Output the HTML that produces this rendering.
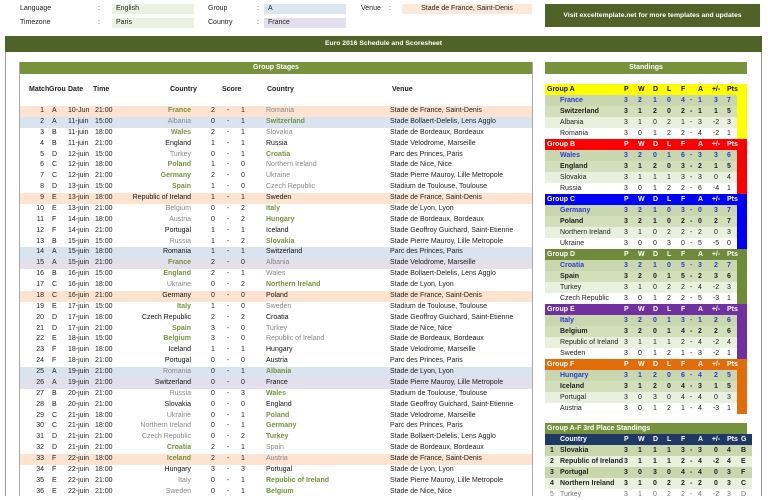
<!DOCTYPE html>
<html><head><meta charset="utf-8"><style>
*{margin:0;padding:0;box-sizing:border-box}
body{width:768px;height:496px;overflow:hidden;background:#fff;font-family:"Liberation Sans",sans-serif;font-size:7px;color:#222;position:relative}
.a{position:absolute;white-space:nowrap}
.lbl{position:absolute;font-size:7px}
.inp{position:absolute;height:10px;font-size:7px;padding-left:4px;line-height:10px}
#sched{position:absolute;left:20px;top:106px;width:512px}
.r{position:relative;height:10.88px;line-height:10.88px}
.r span{position:absolute;top:0}
.n{left:0;width:24px;text-align:right}.g{left:32px}.d{left:48px}.t{left:75px}
.c1{left:90px;width:81px;text-align:right}.s1{left:191px}.dh{left:207px}.s2{left:221px}
.c2{left:246px}.v{left:370px}
.W{color:#76923c;font-weight:bold}.L{color:#888}.D{color:#111}
.pe{background:#fde3d0}.bl{background:#dae4f0}.la{background:#e3dfeb}
.grp{position:absolute;left:545px;width:202px;height:55px}
.gh{height:11px;line-height:11px;color:#fff;font-weight:bold;position:relative}
.sr{height:11px;line-height:11px;position:relative;width:192px}
.sr span,.gh span{position:absolute;top:0}
.nm{left:15px}.p{left:79px}.w{left:93px}.dd{left:108px}.l{left:122px}.f{left:136px}.m{left:145px}.aa{left:153px}.pm{left:166px;width:10px;text-align:center}.pt{left:182px}.gg{left:196px}
.s1c{background:#c9d7ae}.s2c{background:#d2dfba}.s3c{background:#e9f0dd}.s4c{background:#fff}
.bb{font-weight:bold}.blue{color:#2d3bd6;font-weight:bold}
</style></head><body>
<div class="lbl" style="left:20px;top:5px">Language</div><div class="lbl" style="left:98px;top:5px">:</div>
<div class="inp" style="left:112px;top:4px;width:82px;background:#ebf1de">English</div>
<div class="lbl" style="left:208px;top:5px">Group</div><div class="lbl" style="left:257px;top:5px">:</div>
<div class="inp" style="left:264px;top:4px;width:82px;background:#dce6f1">A</div>
<div class="lbl" style="left:361px;top:5px">Venue</div><div class="lbl" style="left:389px;top:5px">:</div>
<div class="inp" style="left:402px;top:4px;width:130px;background:#fde9d9;text-align:center;padding:0">Stade de France, Saint-Denis</div>
<div class="lbl" style="left:20px;top:19px">Timezone</div><div class="lbl" style="left:98px;top:19px">:</div>
<div class="inp" style="left:112px;top:18px;width:82px;background:#ebf1de">Paris</div>
<div class="lbl" style="left:208px;top:19px">Country</div><div class="lbl" style="left:257px;top:19px">:</div>
<div class="inp" style="left:264px;top:18px;width:82px;background:#e4dfec">France</div>
<div class="a" style="left:545px;top:4px;width:215px;height:23px;background:#4f6228;color:#fff;font-weight:bold;font-size:6.8px;text-align:center;line-height:23px">Visit exceltemplate.net for more templates and updates</div>
<div class="a" style="left:5px;top:36px;width:757px;height:16px;background:#4f6228;color:#fff;font-weight:bold;text-align:center;line-height:16px;font-size:6.8px">Euro 2016 Schedule and Scoresheet</div>
<div class="a" style="left:5px;top:52px;width:1px;height:444px;background:#999"></div>
<div class="a" style="left:761px;top:52px;width:1px;height:444px;background:#999"></div>
<div class="a" style="left:19px;top:62px;width:1px;height:434px;background:#aaa"></div>
<div class="a" style="left:532px;top:62px;width:1px;height:434px;background:#aaa"></div>
<div class="a" style="left:20px;top:62px;width:512px;height:12px;background:#76923c;color:#fff;font-weight:bold;text-align:center;line-height:12px">Group Stages</div>
<div class="a" style="left:545px;top:62px;width:202px;height:12px;background:#76923c;color:#fff;font-weight:bold;text-align:center;line-height:12px">Standings</div>
<div class="a bb" style="left:29px;top:86px">Match</div><div class="a bb" style="left:49px;top:86px">Grou</div><div class="a bb" style="left:68px;top:86px">Date</div><div class="a bb" style="left:93px;top:86px">Time</div>
<div class="a bb" style="left:170px;top:86px">Country</div><div class="a bb" style="left:222px;top:86px">Score</div><div class="a bb" style="left:267px;top:86px">Country</div><div class="a bb" style="left:392px;top:86px">Venue</div>
<div id="sched">
<div class="r pe"><span class="n">1</span><span class="g">A</span><span class="d">10-Jun</span><span class="t">21:00</span><span class="c1 W">France</span><span class="s1">2</span><span class="dh">-</span><span class="s2">1</span><span class="c2 L">Romania</span><span class="v">Stade de France, Saint-Denis</span></div>
<div class="r bl"><span class="n">2</span><span class="g">A</span><span class="d">11-juin</span><span class="t">15:00</span><span class="c1 L">Albania</span><span class="s1">0</span><span class="dh">-</span><span class="s2">1</span><span class="c2 W">Switzerland</span><span class="v">Stade Bollaert-Delelis, Lens Agglo</span></div>
<div class="r"><span class="n">3</span><span class="g">B</span><span class="d">11-juin</span><span class="t">18:00</span><span class="c1 W">Wales</span><span class="s1">2</span><span class="dh">-</span><span class="s2">1</span><span class="c2 L">Slovakia</span><span class="v">Stade de Bordeaux, Bordeaux</span></div>
<div class="r"><span class="n">4</span><span class="g">B</span><span class="d">11-juin</span><span class="t">21:00</span><span class="c1 D">England</span><span class="s1">1</span><span class="dh">-</span><span class="s2">1</span><span class="c2 D">Russia</span><span class="v">Stade Velodrome, Marseille</span></div>
<div class="r"><span class="n">5</span><span class="g">D</span><span class="d">12-juin</span><span class="t">15:00</span><span class="c1 L">Turkey</span><span class="s1">0</span><span class="dh">-</span><span class="s2">1</span><span class="c2 W">Croatia</span><span class="v">Parc des Princes, Paris</span></div>
<div class="r"><span class="n">6</span><span class="g">C</span><span class="d">12-juin</span><span class="t">18:00</span><span class="c1 W">Poland</span><span class="s1">1</span><span class="dh">-</span><span class="s2">0</span><span class="c2 L">Northern Ireland</span><span class="v">Stade de Nice, Nice</span></div>
<div class="r"><span class="n">7</span><span class="g">C</span><span class="d">12-juin</span><span class="t">21:00</span><span class="c1 W">Germany</span><span class="s1">2</span><span class="dh">-</span><span class="s2">0</span><span class="c2 L">Ukraine</span><span class="v">Stade Pierre Mauroy, Lille Metropole</span></div>
<div class="r"><span class="n">8</span><span class="g">D</span><span class="d">13-juin</span><span class="t">15:00</span><span class="c1 W">Spain</span><span class="s1">1</span><span class="dh">-</span><span class="s2">0</span><span class="c2 L">Czech Republic</span><span class="v">Stadium de Toulouse, Toulouse</span></div>
<div class="r pe"><span class="n">9</span><span class="g">E</span><span class="d">13-juin</span><span class="t">18:00</span><span class="c1 D">Republic of Ireland</span><span class="s1">1</span><span class="dh">-</span><span class="s2">1</span><span class="c2 D">Sweden</span><span class="v">Stade de France, Saint-Denis</span></div>
<div class="r"><span class="n">10</span><span class="g">E</span><span class="d">13-juin</span><span class="t">21:00</span><span class="c1 L">Belgium</span><span class="s1">0</span><span class="dh">-</span><span class="s2">2</span><span class="c2 W">Italy</span><span class="v">Stade de Lyon, Lyon</span></div>
<div class="r"><span class="n">11</span><span class="g">F</span><span class="d">14-juin</span><span class="t">18:00</span><span class="c1 L">Austria</span><span class="s1">0</span><span class="dh">-</span><span class="s2">2</span><span class="c2 W">Hungary</span><span class="v">Stade de Bordeaux, Bordeaux</span></div>
<div class="r"><span class="n">12</span><span class="g">F</span><span class="d">14-juin</span><span class="t">21:00</span><span class="c1 D">Portugal</span><span class="s1">1</span><span class="dh">-</span><span class="s2">1</span><span class="c2 D">Iceland</span><span class="v">Stade Geoffroy Guichard, Saint-Etienne</span></div>
<div class="r"><span class="n">13</span><span class="g">B</span><span class="d">15-juin</span><span class="t">15:00</span><span class="c1 L">Russia</span><span class="s1">1</span><span class="dh">-</span><span class="s2">2</span><span class="c2 W">Slovakia</span><span class="v">Stade Pierre Mauroy, Lille Metropole</span></div>
<div class="r bl"><span class="n">14</span><span class="g">A</span><span class="d">15-juin</span><span class="t">18:00</span><span class="c1 D">Romania</span><span class="s1">1</span><span class="dh">-</span><span class="s2">1</span><span class="c2 D">Switzerland</span><span class="v">Parc des Princes, Paris</span></div>
<div class="r la"><span class="n">15</span><span class="g">A</span><span class="d">15-juin</span><span class="t">21:00</span><span class="c1 W">France</span><span class="s1">2</span><span class="dh">-</span><span class="s2">0</span><span class="c2 L">Albania</span><span class="v">Stade Velodrome, Marseille</span></div>
<div class="r"><span class="n">16</span><span class="g">B</span><span class="d">16-juin</span><span class="t">15:00</span><span class="c1 W">England</span><span class="s1">2</span><span class="dh">-</span><span class="s2">1</span><span class="c2 L">Wales</span><span class="v">Stade Bollaert-Delelis, Lens Agglo</span></div>
<div class="r"><span class="n">17</span><span class="g">C</span><span class="d">16-juin</span><span class="t">18:00</span><span class="c1 L">Ukraine</span><span class="s1">0</span><span class="dh">-</span><span class="s2">2</span><span class="c2 W">Northern Ireland</span><span class="v">Stade de Lyon, Lyon</span></div>
<div class="r pe"><span class="n">18</span><span class="g">C</span><span class="d">16-juin</span><span class="t">21:00</span><span class="c1 D">Germany</span><span class="s1">0</span><span class="dh">-</span><span class="s2">0</span><span class="c2 D">Poland</span><span class="v">Stade de France, Saint-Denis</span></div>
<div class="r"><span class="n">19</span><span class="g">E</span><span class="d">17-juin</span><span class="t">15:00</span><span class="c1 W">Italy</span><span class="s1">1</span><span class="dh">-</span><span class="s2">0</span><span class="c2 L">Sweden</span><span class="v">Stadium de Toulouse, Toulouse</span></div>
<div class="r"><span class="n">20</span><span class="g">D</span><span class="d">17-juin</span><span class="t">18:00</span><span class="c1 D">Czech Republic</span><span class="s1">2</span><span class="dh">-</span><span class="s2">2</span><span class="c2 D">Croatia</span><span class="v">Stade Geoffroy Guichard, Saint-Etienne</span></div>
<div class="r"><span class="n">21</span><span class="g">D</span><span class="d">17-juin</span><span class="t">21:00</span><span class="c1 W">Spain</span><span class="s1">3</span><span class="dh">-</span><span class="s2">0</span><span class="c2 L">Turkey</span><span class="v">Stade de Nice, Nice</span></div>
<div class="r"><span class="n">22</span><span class="g">E</span><span class="d">18-juin</span><span class="t">15:00</span><span class="c1 W">Belgium</span><span class="s1">3</span><span class="dh">-</span><span class="s2">0</span><span class="c2 L">Republic of Ireland</span><span class="v">Stade de Bordeaux, Bordeaux</span></div>
<div class="r"><span class="n">23</span><span class="g">F</span><span class="d">18-juin</span><span class="t">18:00</span><span class="c1 D">Iceland</span><span class="s1">1</span><span class="dh">-</span><span class="s2">1</span><span class="c2 D">Hungary</span><span class="v">Stade Velodrome, Marseille</span></div>
<div class="r"><span class="n">24</span><span class="g">F</span><span class="d">18-juin</span><span class="t">21:00</span><span class="c1 D">Portugal</span><span class="s1">0</span><span class="dh">-</span><span class="s2">0</span><span class="c2 D">Austria</span><span class="v">Parc des Princes, Paris</span></div>
<div class="r bl"><span class="n">25</span><span class="g">A</span><span class="d">19-juin</span><span class="t">21:00</span><span class="c1 L">Romania</span><span class="s1">0</span><span class="dh">-</span><span class="s2">1</span><span class="c2 W">Albania</span><span class="v">Stade de Lyon, Lyon</span></div>
<div class="r la"><span class="n">26</span><span class="g">A</span><span class="d">19-juin</span><span class="t">21:00</span><span class="c1 D">Switzerland</span><span class="s1">0</span><span class="dh">-</span><span class="s2">0</span><span class="c2 D">France</span><span class="v">Stade Pierre Mauroy, Lille Metropole</span></div>
<div class="r"><span class="n">27</span><span class="g">B</span><span class="d">20-juin</span><span class="t">21:00</span><span class="c1 L">Russia</span><span class="s1">0</span><span class="dh">-</span><span class="s2">3</span><span class="c2 W">Wales</span><span class="v">Stadium de Toulouse, Toulouse</span></div>
<div class="r"><span class="n">28</span><span class="g">B</span><span class="d">20-juin</span><span class="t">21:00</span><span class="c1 D">Slovakia</span><span class="s1">0</span><span class="dh">-</span><span class="s2">0</span><span class="c2 D">England</span><span class="v">Stade Geoffroy Guichard, Saint-Etienne</span></div>
<div class="r"><span class="n">29</span><span class="g">C</span><span class="d">21-juin</span><span class="t">18:00</span><span class="c1 L">Ukraine</span><span class="s1">0</span><span class="dh">-</span><span class="s2">1</span><span class="c2 W">Poland</span><span class="v">Stade Velodrome, Marseille</span></div>
<div class="r"><span class="n">30</span><span class="g">C</span><span class="d">21-juin</span><span class="t">18:00</span><span class="c1 L">Northern Ireland</span><span class="s1">0</span><span class="dh">-</span><span class="s2">1</span><span class="c2 W">Germany</span><span class="v">Parc des Princes, Paris</span></div>
<div class="r"><span class="n">31</span><span class="g">D</span><span class="d">21-juin</span><span class="t">21:00</span><span class="c1 L">Czech Republic</span><span class="s1">0</span><span class="dh">-</span><span class="s2">2</span><span class="c2 W">Turkey</span><span class="v">Stade Bollaert-Delelis, Lens Agglo</span></div>
<div class="r"><span class="n">32</span><span class="g">D</span><span class="d">21-juin</span><span class="t">21:00</span><span class="c1 W">Croatia</span><span class="s1">2</span><span class="dh">-</span><span class="s2">1</span><span class="c2 L">Spain</span><span class="v">Stade de Bordeaux, Bordeaux</span></div>
<div class="r pe"><span class="n">33</span><span class="g">F</span><span class="d">22-juin</span><span class="t">18:00</span><span class="c1 W">Iceland</span><span class="s1">2</span><span class="dh">-</span><span class="s2">1</span><span class="c2 L">Austria</span><span class="v">Stade de France, Saint-Denis</span></div>
<div class="r"><span class="n">34</span><span class="g">F</span><span class="d">22-juin</span><span class="t">18:00</span><span class="c1 D">Hungary</span><span class="s1">3</span><span class="dh">-</span><span class="s2">3</span><span class="c2 D">Portugal</span><span class="v">Stade de Lyon, Lyon</span></div>
<div class="r"><span class="n">35</span><span class="g">E</span><span class="d">22-juin</span><span class="t">21:00</span><span class="c1 L">Italy</span><span class="s1">0</span><span class="dh">-</span><span class="s2">1</span><span class="c2 W">Republic of Ireland</span><span class="v">Stade Pierre Mauroy, Lille Metropole</span></div>
<div class="r"><span class="n">36</span><span class="g">E</span><span class="d">22-juin</span><span class="t">21:00</span><span class="c1 L">Sweden</span><span class="s1">0</span><span class="dh">-</span><span class="s2">1</span><span class="c2 W">Belgium</span><span class="v">Stade de Nice, Nice</span></div>
</div>

<div class="grp" style="top:84px;background:#ffff00">
<div class="gh" style="color:#111"><span style="left:2px">Group A</span><span class="p">P</span><span class="w">W</span><span class="dd">D</span><span class="l">L</span><span class="f">F</span><span class="aa">A</span><span class="pm">+/-</span><span class="pt">Pts</span></div>
<div class="sr s1c"><span class="nm blue">France</span><span class="p blue">3</span><span class="w blue">2</span><span class="dd blue">1</span><span class="l blue">0</span><span class="f blue">4</span><span class="m">-</span><span class="aa blue">1</span><span class="pm blue">3</span><span class="pt blue">7</span></div>
<div class="sr s2c bb"><span class="nm">Switzerland</span><span class="p">3</span><span class="w">1</span><span class="dd">2</span><span class="l">0</span><span class="f">2</span><span class="m">-</span><span class="aa">1</span><span class="pm">1</span><span class="pt">5</span></div>
<div class="sr s3c"><span class="nm">Albania</span><span class="p">3</span><span class="w">1</span><span class="dd">0</span><span class="l">2</span><span class="f">1</span><span class="m">-</span><span class="aa">3</span><span class="pm">-2</span><span class="pt">3</span></div>
<div class="sr s4c"><span class="nm">Romania</span><span class="p">3</span><span class="w">0</span><span class="dd">1</span><span class="l">2</span><span class="f">2</span><span class="m">-</span><span class="aa">4</span><span class="pm">-2</span><span class="pt">1</span></div>
</div>
<div class="grp" style="top:139px;background:#ff0000">
<div class="gh"><span style="left:2px">Group B</span><span class="p">P</span><span class="w">W</span><span class="dd">D</span><span class="l">L</span><span class="f">F</span><span class="aa">A</span><span class="pm">+/-</span><span class="pt">Pts</span></div>
<div class="sr s1c"><span class="nm blue">Wales</span><span class="p blue">3</span><span class="w blue">2</span><span class="dd blue">0</span><span class="l blue">1</span><span class="f blue">6</span><span class="m">-</span><span class="aa blue">3</span><span class="pm blue">3</span><span class="pt blue">6</span></div>
<div class="sr s2c bb"><span class="nm">England</span><span class="p">3</span><span class="w">1</span><span class="dd">2</span><span class="l">0</span><span class="f">3</span><span class="m">-</span><span class="aa">2</span><span class="pm">1</span><span class="pt">5</span></div>
<div class="sr s3c"><span class="nm">Slovakia</span><span class="p">3</span><span class="w">1</span><span class="dd">1</span><span class="l">1</span><span class="f">3</span><span class="m">-</span><span class="aa">3</span><span class="pm">0</span><span class="pt">4</span></div>
<div class="sr s4c"><span class="nm">Russia</span><span class="p">3</span><span class="w">0</span><span class="dd">1</span><span class="l">2</span><span class="f">2</span><span class="m">-</span><span class="aa">6</span><span class="pm">-4</span><span class="pt">1</span></div>
</div>
<div class="grp" style="top:194px;background:#0000ff">
<div class="gh"><span style="left:2px">Group C</span><span class="p">P</span><span class="w">W</span><span class="dd">D</span><span class="l">L</span><span class="f">F</span><span class="aa">A</span><span class="pm">+/-</span><span class="pt">Pts</span></div>
<div class="sr s1c"><span class="nm blue">Germany</span><span class="p blue">3</span><span class="w blue">2</span><span class="dd blue">1</span><span class="l blue">0</span><span class="f blue">3</span><span class="m">-</span><span class="aa blue">0</span><span class="pm blue">3</span><span class="pt blue">7</span></div>
<div class="sr s2c bb"><span class="nm">Poland</span><span class="p">3</span><span class="w">2</span><span class="dd">1</span><span class="l">0</span><span class="f">2</span><span class="m">-</span><span class="aa">0</span><span class="pm">2</span><span class="pt">7</span></div>
<div class="sr s3c"><span class="nm">Northern Ireland</span><span class="p">3</span><span class="w">1</span><span class="dd">0</span><span class="l">2</span><span class="f">2</span><span class="m">-</span><span class="aa">2</span><span class="pm">0</span><span class="pt">3</span></div>
<div class="sr s4c"><span class="nm">Ukraine</span><span class="p">3</span><span class="w">0</span><span class="dd">0</span><span class="l">3</span><span class="f">0</span><span class="m">-</span><span class="aa">5</span><span class="pm">-5</span><span class="pt">0</span></div>
</div>
<div class="grp" style="top:249px;background:#6f8a3a">
<div class="gh"><span style="left:2px">Group D</span><span class="p">P</span><span class="w">W</span><span class="dd">D</span><span class="l">L</span><span class="f">F</span><span class="aa">A</span><span class="pm">+/-</span><span class="pt">Pts</span></div>
<div class="sr s1c"><span class="nm blue">Croatia</span><span class="p blue">3</span><span class="w blue">2</span><span class="dd blue">1</span><span class="l blue">0</span><span class="f blue">5</span><span class="m">-</span><span class="aa blue">3</span><span class="pm blue">2</span><span class="pt blue">7</span></div>
<div class="sr s2c bb"><span class="nm">Spain</span><span class="p">3</span><span class="w">2</span><span class="dd">0</span><span class="l">1</span><span class="f">5</span><span class="m">-</span><span class="aa">2</span><span class="pm">3</span><span class="pt">6</span></div>
<div class="sr s3c"><span class="nm">Turkey</span><span class="p">3</span><span class="w">1</span><span class="dd">0</span><span class="l">2</span><span class="f">2</span><span class="m">-</span><span class="aa">4</span><span class="pm">-2</span><span class="pt">3</span></div>
<div class="sr s4c"><span class="nm">Czech Republic</span><span class="p">3</span><span class="w">0</span><span class="dd">1</span><span class="l">2</span><span class="f">2</span><span class="m">-</span><span class="aa">5</span><span class="pm">-3</span><span class="pt">1</span></div>
</div>
<div class="grp" style="top:304px;background:#7030a0">
<div class="gh"><span style="left:2px">Group E</span><span class="p">P</span><span class="w">W</span><span class="dd">D</span><span class="l">L</span><span class="f">F</span><span class="aa">A</span><span class="pm">+/-</span><span class="pt">Pts</span></div>
<div class="sr s1c"><span class="nm blue">Italy</span><span class="p blue">3</span><span class="w blue">2</span><span class="dd blue">0</span><span class="l blue">1</span><span class="f blue">3</span><span class="m">-</span><span class="aa blue">1</span><span class="pm blue">2</span><span class="pt blue">6</span></div>
<div class="sr s2c bb"><span class="nm">Belgium</span><span class="p">3</span><span class="w">2</span><span class="dd">0</span><span class="l">1</span><span class="f">4</span><span class="m">-</span><span class="aa">2</span><span class="pm">2</span><span class="pt">6</span></div>
<div class="sr s3c"><span class="nm">Republic of Ireland</span><span class="p">3</span><span class="w">1</span><span class="dd">1</span><span class="l">1</span><span class="f">2</span><span class="m">-</span><span class="aa">4</span><span class="pm">-2</span><span class="pt">4</span></div>
<div class="sr s4c"><span class="nm">Sweden</span><span class="p">3</span><span class="w">0</span><span class="dd">1</span><span class="l">2</span><span class="f">1</span><span class="m">-</span><span class="aa">3</span><span class="pm">-2</span><span class="pt">1</span></div>
</div>
<div class="grp" style="top:359px;background:#e26b0a">
<div class="gh"><span style="left:2px">Group F</span><span class="p">P</span><span class="w">W</span><span class="dd">D</span><span class="l">L</span><span class="f">F</span><span class="aa">A</span><span class="pm">+/-</span><span class="pt">Pts</span></div>
<div class="sr s1c"><span class="nm blue">Hungary</span><span class="p blue">3</span><span class="w blue">1</span><span class="dd blue">2</span><span class="l blue">0</span><span class="f blue">6</span><span class="m">-</span><span class="aa blue">4</span><span class="pm blue">2</span><span class="pt blue">5</span></div>
<div class="sr s2c bb"><span class="nm">Iceland</span><span class="p">3</span><span class="w">1</span><span class="dd">2</span><span class="l">0</span><span class="f">4</span><span class="m">-</span><span class="aa">3</span><span class="pm">1</span><span class="pt">5</span></div>
<div class="sr s3c"><span class="nm">Portugal</span><span class="p">3</span><span class="w">0</span><span class="dd">3</span><span class="l">0</span><span class="f">4</span><span class="m">-</span><span class="aa">4</span><span class="pm">0</span><span class="pt">3</span></div>
<div class="sr s4c"><span class="nm">Austria</span><span class="p">3</span><span class="w">0</span><span class="dd">1</span><span class="l">2</span><span class="f">1</span><span class="m">-</span><span class="aa">4</span><span class="pm">-3</span><span class="pt">1</span></div>
</div>

<div class="a" style="left:545px;top:423px;width:202px;height:11px;background:#76923c;color:#fff;font-weight:bold;line-height:11px;padding-left:2px">Group A-F 3rd Place Standings</div>
<div class="grp" style="top:434px;height:62px;width:207px">
<div class="gh" style="background:#1f3864;width:207px"><span class="nm">Country</span><span class="p">P</span><span class="w">W</span><span class="dd">D</span><span class="l">L</span><span class="f">F</span><span class="aa">A</span><span class="pm">+/-</span><span class="pt">Pts</span><span class="gg">G</span></div>
<div class="sr s1c bb" style="width:207px"><span style="left:5px">1</span><span class="nm">Slovakia</span><span class="p">3</span><span class="w">1</span><span class="dd">1</span><span class="l">1</span><span class="f">3</span><span class="m">-</span><span class="aa">3</span><span class="pm">0</span><span class="pt">4</span><span class="gg">B</span></div>
<div class="sr s3c bb" style="width:207px"><span style="left:5px">2</span><span class="nm">Republic of Ireland</span><span class="p">3</span><span class="w">1</span><span class="dd">1</span><span class="l">1</span><span class="f">2</span><span class="m">-</span><span class="aa">4</span><span class="pm">-2</span><span class="pt">4</span><span class="gg">E</span></div>
<div class="sr s1c bb" style="width:207px"><span style="left:5px">3</span><span class="nm">Portugal</span><span class="p">3</span><span class="w">0</span><span class="dd">3</span><span class="l">0</span><span class="f">4</span><span class="m">-</span><span class="aa">4</span><span class="pm">0</span><span class="pt">3</span><span class="gg">F</span></div>
<div class="sr s3c bb" style="width:207px"><span style="left:5px">4</span><span class="nm">Northern Ireland</span><span class="p">3</span><span class="w">1</span><span class="dd">0</span><span class="l">2</span><span class="f">2</span><span class="m">-</span><span class="aa">2</span><span class="pm">0</span><span class="pt">3</span><span class="gg">C</span></div>
<div class="sr s4c" style="width:207px;color:#777"><span style="left:5px">5</span><span class="nm">Turkey</span><span class="p">3</span><span class="w">1</span><span class="dd">0</span><span class="l">2</span><span class="f">2</span><span class="m">-</span><span class="aa">4</span><span class="pm">-2</span><span class="pt">3</span><span class="gg">D</span></div>
</div>
</body></html>
